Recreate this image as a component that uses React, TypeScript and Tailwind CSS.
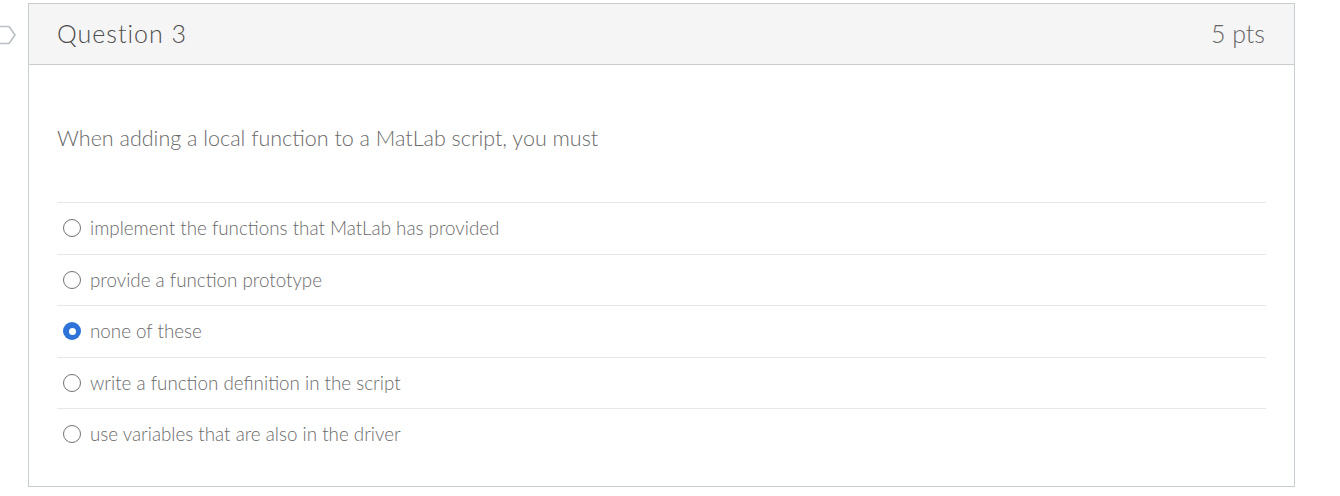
import React from "react";

const answers = [
  { text: "implement the functions that MatLab has provided", checked: false },
  { text: "provide a function prototype", checked: false },
  { text: "none of these", checked: true },
  { text: "write a function definition in the script", checked: false },
  { text: "use variables that are also in the driver", checked: false },
];

function Radio({ checked }: { checked: boolean }) {
  if (checked) {
    return (
      <span className="w-[18px] h-[18px] rounded-full bg-[#2d73d8] flex items-center justify-center shrink-0">
        <span className="w-[7px] h-[7px] rounded-full bg-white" />
      </span>
    );
  }
  return <span className="w-[18px] h-[18px] rounded-full border-[1.5px] border-[#737373] bg-white shrink-0" />;
}

export default function App() {
  return (
    <div className="w-[1340px] h-[496px] bg-white relative overflow-hidden" style={{ fontFamily: "Lato, 'Liberation Sans', sans-serif" }}>
      <svg className="absolute left-0 top-[24px]" width="18" height="24" viewBox="0 0 18 24">
        <path d="M-10 2.5 H9 L15 11 L9 19.5 H-10 Z" fill="none" stroke="#b9bfc4" strokeWidth="1.6" strokeLinejoin="round" />
      </svg>
      <div className="ml-[28px] mt-[3px] w-[1267px] h-[484px] border border-[#c7cdd1] flex flex-col">
        <div className="h-[61px] bg-[#f5f5f5] border-b border-[#c7cdd1] flex items-center justify-between pl-[28px] pr-[29px]">
          <span className="text-[25px] text-[#4d4d4d] tracking-[1px] font-light">Question 3</span>
          <span className="text-[25px] text-[#666666] font-light">5 pts</span>
        </div>
        <div className="px-[28px] pt-[59px]">
          <div className="text-[21.5px] leading-[28px] text-[#6a6a6a] font-light">
            When adding a local function to a MatLab script, you must
          </div>
          <div className="mt-[50px]">
            {answers.map((a, i) => (
              <div key={i} className="h-[51.5px] border-t-[1.5px] border-[#e8e8e8] flex items-center pl-[6px] gap-[9px]">
                <Radio checked={a.checked} />
                <span className="text-[18.8px] text-[#6a6a6a] font-light">{a.text}</span>
              </div>
            ))}
          </div>
        </div>
      </div>
    </div>
  );
}
